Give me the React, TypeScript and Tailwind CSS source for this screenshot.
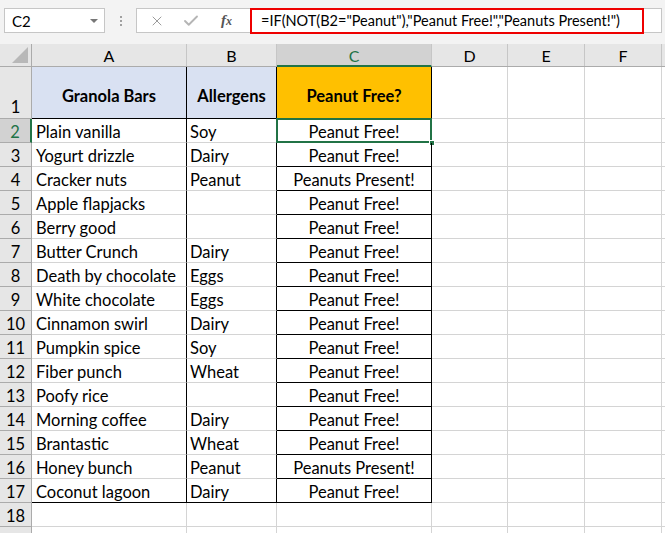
import { X, Check } from "lucide-react";

const rows: [string, string, string][] = [
  ["Plain vanilla", "Soy", "Peanut Free!"],
  ["Yogurt drizzle", "Dairy", "Peanut Free!"],
  ["Cracker nuts", "Peanut", "Peanuts Present!"],
  ["Apple flapjacks", "", "Peanut Free!"],
  ["Berry good", "", "Peanut Free!"],
  ["Butter Crunch", "Dairy", "Peanut Free!"],
  ["Death by chocolate", "Eggs", "Peanut Free!"],
  ["White chocolate", "Eggs", "Peanut Free!"],
  ["Cinnamon swirl", "Dairy", "Peanut Free!"],
  ["Pumpkin spice", "Soy", "Peanut Free!"],
  ["Fiber punch", "Wheat", "Peanut Free!"],
  ["Poofy rice", "", "Peanut Free!"],
  ["Morning coffee", "Dairy", "Peanut Free!"],
  ["Brantastic", "Wheat", "Peanut Free!"],
  ["Honey bunch", "Peanut", "Peanuts Present!"],
  ["Coconut lagoon", "Dairy", "Peanut Free!"],
];

const font = { fontFamily: "Lato, 'Liberation Sans', sans-serif" };

function EmptyCells() {
  return (
    <>
      <div className="w-[76px] shrink-0 border-r border-b border-[#d4d4d4]" />
      <div className="w-[77px] shrink-0 border-r border-b border-[#d4d4d4]" />
      <div className="w-[77px] shrink-0 border-r border-b border-[#d4d4d4]" />
      <div className="flex-1 border-b border-[#d4d4d4]" />
    </>
  );
}

export default function App() {
  return (
    <div className="w-[665px] h-[533px] overflow-hidden bg-white text-black text-[16.5px] leading-[18px]" style={font}>
      {/* Formula bar */}
      <div className="h-[44px] bg-[#f3f3f3] flex items-start pt-[8px] pl-[4px] pr-[3px]">
        <div className="w-[101px] h-[25px] bg-white border border-[#c6c6c6] flex items-center justify-between pl-[7px] pr-[6px]">
          <span className="text-[15px]">C2</span>
          <span className="w-0 h-0 border-l-[4px] border-r-[4px] border-t-[4px] border-l-transparent border-r-transparent border-t-[#777]" />
        </div>
        <div className="w-[31px] h-[25px] flex flex-col items-center justify-center gap-[2px]">
          <span className="w-[2px] h-[2px] bg-[#a0a0a0]" />
          <span className="w-[2px] h-[2px] bg-[#a0a0a0]" />
          <span className="w-[2px] h-[2px] bg-[#a0a0a0]" />
        </div>
        <div className="flex-1 h-[25px] bg-white border border-[#c6c6c6] flex">
          <div className="w-[113px] flex items-center pl-[12px] text-[#9b9b9b]">
            <X size={16} strokeWidth={1.5} />
            <Check size={18} strokeWidth={2.5} className="ml-[17px] text-[#b5b5b5]" />
            <span className="ml-[21px] italic font-bold text-[15px] text-[#555]" style={{ fontFamily: "'Liberation Serif', serif" }}>
              <span>f</span><span className="text-[12px]">x</span>
            </span>
          </div>
          <div className="w-[394px] -mt-[1px] h-[26px] border-2 border-[#ee0000] flex items-center pl-[9px] text-[14.5px]">
            =IF(NOT(B2="Peanut"),"Peanut Free!","Peanuts Present!")
          </div>
        </div>
      </div>

      {/* Column headers */}
      <div className="h-[23px] flex bg-[#e6e6e6] border-b border-[#ababab] text-[16px]">
        <div className="w-[32px] shrink-0 border-r border-[#ababab] relative overflow-hidden">
          <svg className="absolute right-[3px] bottom-[3px]" width="16" height="16" viewBox="0 0 16 16">
            <polygon points="16,0 16,16 0,16" fill="#b8b8b8" />
          </svg>
        </div>
        <div className="w-[155px] shrink-0 border-r border-[#c6c6c6] flex items-center justify-center pt-[2px]">A</div>
        <div className="w-[90px] shrink-0 border-r border-[#c6c6c6] flex items-center justify-center pt-[2px]">B</div>
        <div className="w-[155px] shrink-0 border-r border-[#c6c6c6] bg-[#d2d2d2] -mb-[1px] border-b-2 border-b-[#217346] flex items-center justify-center pt-[2px] text-[#217346]">C</div>
        <div className="w-[76px] shrink-0 border-r border-[#c6c6c6] flex items-center justify-center pt-[2px]">D</div>
        <div className="w-[77px] shrink-0 border-r border-[#c6c6c6] flex items-center justify-center pt-[2px]">E</div>
        <div className="w-[77px] shrink-0 border-r border-[#c6c6c6] flex items-center justify-center pt-[2px]">F</div>
        <div className="flex-1" />
      </div>

      {/* Row 1 */}
      <div className="h-[52px] flex">
        <div className="w-[32px] shrink-0 bg-[#e6e6e6] border-r border-b border-[#ababab] flex items-end justify-center pb-[2px]">1</div>
        <div className="w-[155px] shrink-0 bg-[#d9e1f2] border-r border-b border-black flex items-center justify-center font-bold pt-[6px]">Granola Bars</div>
        <div className="w-[90px] shrink-0 bg-[#d9e1f2] border-r border-b border-black flex items-center justify-center font-bold pt-[6px]">Allergens</div>
        <div className="w-[155px] shrink-0 bg-[#ffc000] border-r border-b border-black flex items-center justify-center font-bold pt-[6px]">Peanut Free?</div>
        <EmptyCells />
      </div>

      {/* Data rows */}
      {rows.map(([a, b, c], i) => {
        const n = i + 2;
        const sel = n === 2;
        const last = n === 17;
        return (
          <div key={n} className="h-[24px] flex">
            <div
              className={
                "w-[32px] shrink-0 border-b border-[#ababab] flex items-center justify-center pt-[3px] " +
                (sel ? "bg-[#d2d2d2] text-[#217346] border-r-2 border-r-[#217346]" : "bg-[#e6e6e6] border-r")
              }
            >
              {n}
            </div>
            <div className={"w-[155px] shrink-0 border-r border-r-black border-b flex items-center pl-[4px] pt-[3px] " + (last ? "border-b-black" : "border-b-[#d4d4d4]")}>
              {a}
            </div>
            <div className={"w-[90px] shrink-0 border-r border-r-black border-b flex items-center pl-[3px] pt-[3px] " + (last ? "border-b-black" : "border-b-[#d4d4d4]")}>
              {b}
            </div>
            <div className="w-[155px] shrink-0 border-r border-b border-black flex items-center justify-center pt-[3px] relative">
              {c}
              {sel && (
                <>
                  <div className="absolute -left-[1px] -top-[1px] -right-[1px] -bottom-[1px] border-2 border-[#217346]" />
                  <div className="absolute -right-[4px] -bottom-[4px] w-[6px] h-[6px] bg-[#217346] border border-white" />
                </>
              )}
            </div>
            <EmptyCells />
          </div>
        );
      })}

      {/* Rows 18, 19 */}
      {[18, 19].map((n) => (
        <div key={n} className="h-[24px] flex">
          <div className="w-[32px] shrink-0 bg-[#e6e6e6] border-r border-b border-[#ababab] flex items-center justify-center pt-[3px]">{n === 18 ? n : ""}</div>
          <div className="w-[155px] shrink-0 border-r border-b border-[#d4d4d4]" />
          <div className="w-[90px] shrink-0 border-r border-b border-[#d4d4d4]" />
          <div className="w-[155px] shrink-0 border-r border-b border-[#d4d4d4]" />
          <EmptyCells />
        </div>
      ))}
    </div>
  );
}
